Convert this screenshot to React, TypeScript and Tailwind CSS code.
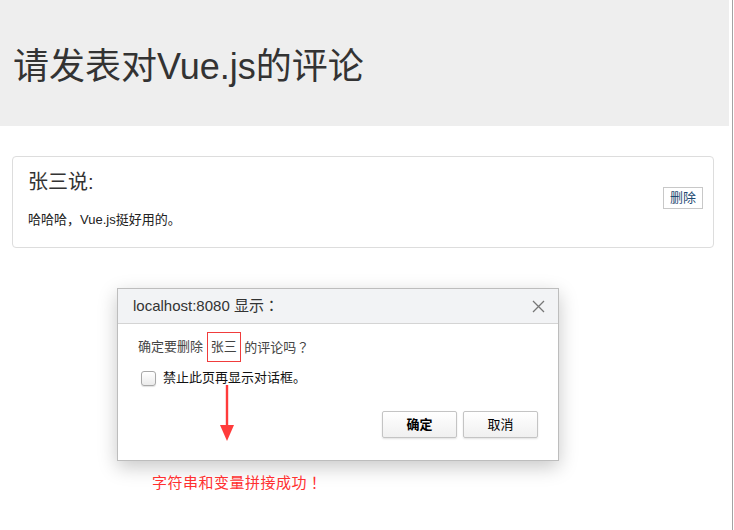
import React from "react"

const font = "font-['Liberation_Sans','Noto_Sans_CJK_SC',sans-serif]"
const cjk = "font-['Noto_Sans_CJK_JP',sans-serif]"

function CommentCard() {
  return (
    <div className="ml-[12px] mt-[30px] w-[702px] h-[92px] border border-[#dddddd] rounded-[4px] bg-white flex items-center justify-between pl-[15px] pr-[10px]">
      <div className="flex flex-col mb-[6px]">
        <h3 className="text-[20px] leading-[24px] text-[#333333]">张三说:</h3>
        <p className="mt-[17px] text-[13px] leading-[18px] text-[#222222]">哈哈哈，Vue.js挺好用的。</p>
      </div>
      <button className="mb-[8px] w-[40px] h-[22px] border border-[#c8c8c8] bg-white text-[13px] leading-[18px] text-[#1f4a72]">
        删除
      </button>
    </div>
  )
}

function ConfirmDialog() {
  return (
    <div className="absolute left-[117px] top-[288px] w-[442px] h-[173px] bg-white border border-[#bdbdbd] shadow-[0_6px_18px_rgba(0,0,0,0.22)] flex flex-col">
      {/* title bar */}
      <div className="h-[35px] bg-[#f2f3f5] border-b border-[#d4d4d4] flex items-center justify-between pl-[15px] pr-[13px]">
        <span className="text-[15px] text-[#333333]">
          localhost:8080 显示<span className={cjk}>：</span>
        </span>
        <svg width="13" height="13" viewBox="0 0 13 13">
          <path d="M1 1 L12 12 M12 1 L1 12" stroke="#777777" strokeWidth="1.3" fill="none" />
        </svg>
      </div>
      <div className="flex-1 flex flex-col pl-[20px] pr-[20px]">
        <div className="mt-[8px] flex items-center text-[13px] leading-[20px] text-[#444444]">
          <span>确定要删除&nbsp;</span>
          <span className="inline-block border border-[#f03c3c] px-[3px] py-[4px]">张三</span>
          <span>
            &nbsp;的评论吗<span className={cjk}>？</span>
          </span>
        </div>
        <label className="mt-[7px] ml-[3px] flex items-center gap-[7px] text-[13px] leading-[18px] text-[#111111]">
          <span className="w-[15px] h-[15px] rounded-[3px] border border-[#a8a8a8] bg-linear-to-b from-white to-[#ebebeb] shadow-[0_1px_1px_rgba(0,0,0,0.12)]" />
          禁止此页再显示对话框。
        </label>
        <div className="mt-[24px] flex justify-end gap-[6px]">
          <button className="w-[75px] h-[27px] border border-[#c4c4c4] rounded-[2px] bg-linear-to-b from-white to-[#f0f0f0] shadow-[0_1px_2px_rgba(0,0,0,0.12)] text-[13px] font-semibold text-black">
            确定
          </button>
          <button className="w-[75px] h-[27px] border border-[#c4c4c4] rounded-[2px] bg-linear-to-b from-white to-[#f0f0f0] shadow-[0_1px_2px_rgba(0,0,0,0.12)] text-[13px] text-black">
            取消
          </button>
        </div>
      </div>
    </div>
  )
}

export default function App() {
  return (
    <div className={`relative w-[734px] h-[530px] bg-white overflow-hidden flex ${font}`}>
      <div className="w-[729px]">
        {/* jumbotron */}
        <div className="h-[126px] bg-[#eeeeee] flex items-center pl-[13px] pt-[8px]">
          <h1 className="text-[36px] leading-[40px] text-[#333333]">请发表对Vue.js的评论</h1>
        </div>
        <CommentCard />
      </div>
      <div className="w-[3px]" />
      <div className="w-px bg-[#a3a3a3]" />

      <ConfirmDialog />

      {/* annotation arrow */}
      <svg className="absolute left-[219px] top-[385px]" width="16" height="56" viewBox="0 0 16 56">
        <rect x="6.8" y="0" width="2.4" height="42" fill="#ff3b3b" />
        <path d="M1 40 L15 40 L8 56 Z" fill="#ff3b3b" />
      </svg>
      <span className="absolute left-[152px] top-[472px] text-[15px] leading-[20px] tracking-[0.5px] text-[#ff3030]">
        字符串和变量拼接成功<span className={cjk}>！</span>
      </span>
    </div>
  )
}
